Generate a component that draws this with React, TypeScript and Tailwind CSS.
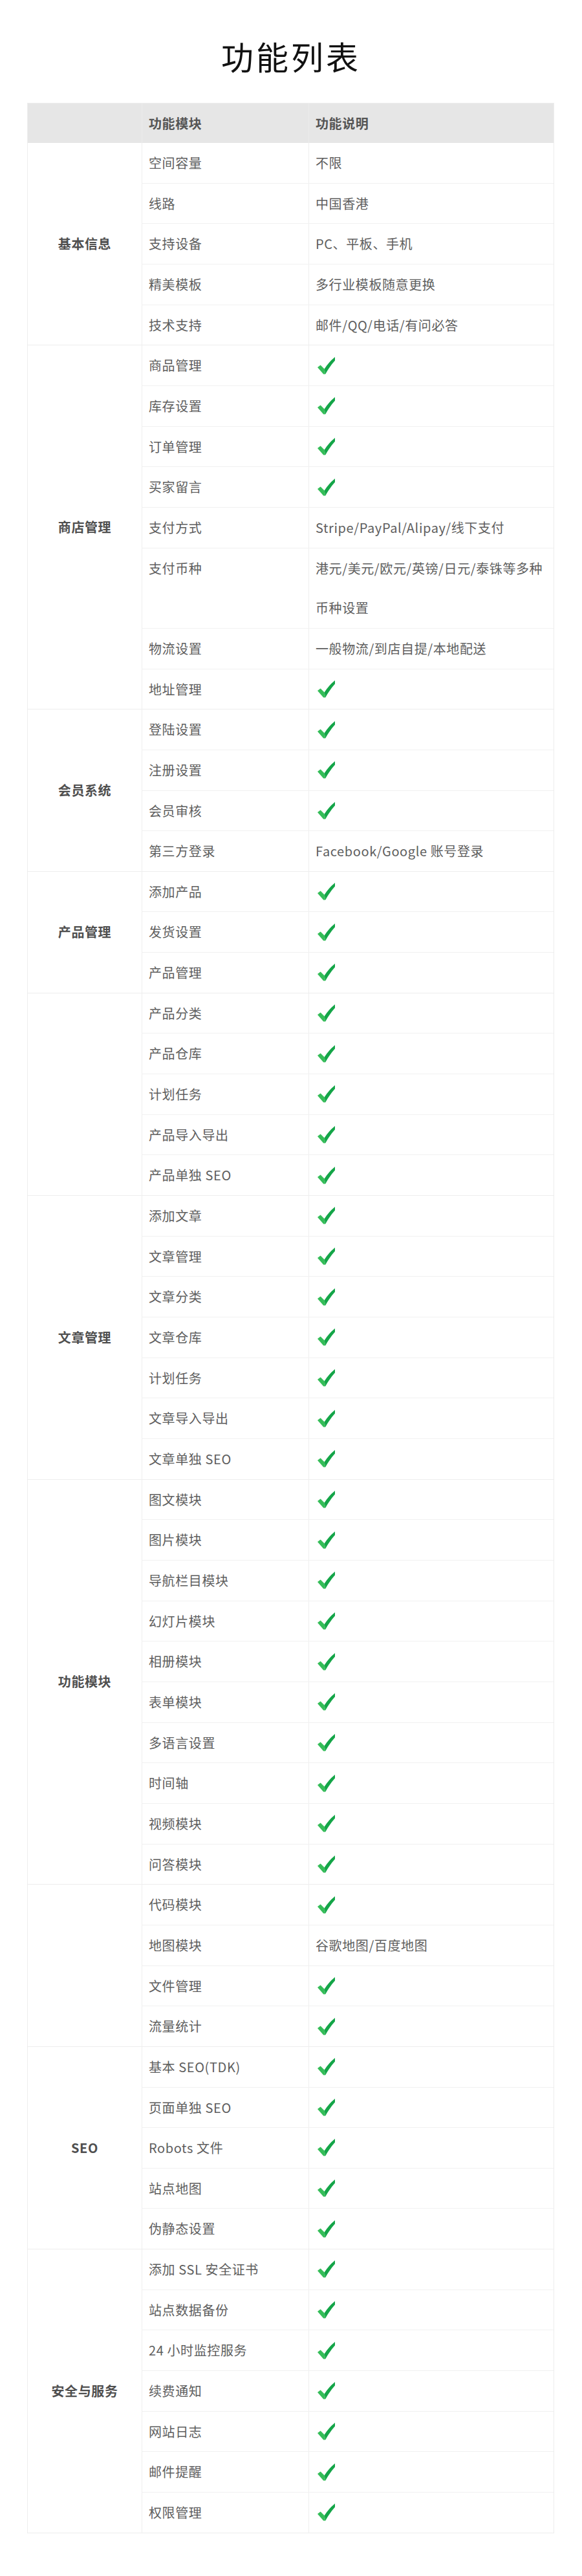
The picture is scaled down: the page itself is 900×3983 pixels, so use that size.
import React from "react";

type Item = { name: string; desc?: string; lines?: string[] };
type Group = { label: string; items: Item[] };

const C = (name: string): Item => ({ name });
const D = (name: string, desc: string): Item => ({ name, desc });

const groups: Group[] = [
  {
    label: "基本信息",
    items: [
      D("空间容量", "不限"),
      D("线路", "中国香港"),
      D("支持设备", "PC、平板、手机"),
      D("精美模板", "多行业模板随意更换"),
      D("技术支持", "邮件/QQ/电话/有问必答"),
    ],
  },
  {
    label: "商店管理",
    items: [
      C("商品管理"),
      C("库存设置"),
      C("订单管理"),
      C("买家留言"),
      D("支付方式", "Stripe/PayPal/Alipay/线下支付"),
      { name: "支付币种", lines: ["港元/美元/欧元/英镑/日元/泰铢等多种", "币种设置"] },
      D("物流设置", "一般物流/到店自提/本地配送"),
      C("地址管理"),
    ],
  },
  {
    label: "会员系统",
    items: [C("登陆设置"), C("注册设置"), C("会员审核"), D("第三方登录", "Facebook/Google 账号登录")],
  },
  { label: "产品管理", items: [C("添加产品"), C("发货设置"), C("产品管理")] },
  {
    label: "",
    items: [C("产品分类"), C("产品仓库"), C("计划任务"), C("产品导入导出"), C("产品单独 SEO")],
  },
  {
    label: "文章管理",
    items: [
      C("添加文章"),
      C("文章管理"),
      C("文章分类"),
      C("文章仓库"),
      C("计划任务"),
      C("文章导入导出"),
      C("文章单独 SEO"),
    ],
  },
  {
    label: "功能模块",
    items: [
      C("图文模块"),
      C("图片模块"),
      C("导航栏目模块"),
      C("幻灯片模块"),
      C("相册模块"),
      C("表单模块"),
      C("多语言设置"),
      C("时间轴"),
      C("视频模块"),
      C("问答模块"),
    ],
  },
  {
    label: "",
    items: [C("代码模块"), D("地图模块", "谷歌地图/百度地图"), C("文件管理"), C("流量统计")],
  },
  {
    label: "SEO",
    items: [C("基本 SEO(TDK)"), C("页面单独 SEO"), C("Robots 文件"), C("站点地图"), C("伪静态设置")],
  },
  {
    label: "安全与服务",
    items: [
      C("添加 SSL 安全证书"),
      C("站点数据备份"),
      C("24 小时监控服务"),
      C("续费通知"),
      C("网站日志"),
      C("邮件提醒"),
      C("权限管理"),
    ],
  },
];

function Check() {
  return (
    <svg width="27" height="27" viewBox="0 0 27 27" className="ml-[3px]">
      <path d="M0 16 L4.6 12.6 L10.6 18.6 L12.2 26.4 L9.2 26.4 Z" fill="#35bd58" />
      <path d="M10.6 18.6 Q17 8 27 0 L27 5.6 Q19.5 13.5 12.2 26.4 Z" fill="#14a548" />
    </svg>
  );
}

function Row({ item, last }: { item: Item; last: boolean }) {
  const double = !!item.lines;
  const rowCls = last
    ? double
      ? "flex h-[123.32px]"
      : "flex h-[61.66px]"
    : double
    ? "flex h-[124.32px] border-b border-[#f1f1f1]"
    : "flex h-[62.66px] border-b border-[#f1f1f1]";
  return (
    <div className={rowCls}>
      <div className="w-[258px] shrink-0 border-r border-[#efefef] pl-[10px] leading-[61.66px] text-[#5e5e5e]">
        {item.name}
      </div>
      <div className="flex-1 pl-[10px] leading-[61.66px] text-[#5e5e5e]">
        {item.lines ? (
          item.lines.map((l) => <div key={l}>{l}</div>)
        ) : item.desc ? (
          item.desc
        ) : (
          <div className="flex h-full items-center">
            <Check />
          </div>
        )}
      </div>
    </div>
  );
}

export default function App() {
  return (
    <div
      className="min-h-[3983px] bg-white pb-[64px]"
      style={{ fontFamily: '"Noto Sans CJK SC", "Noto Sans", sans-serif' }}
    >
      <h1 className="pt-[61px] text-center text-[50px] leading-[50px] tracking-[4px] text-[#111] font-normal">
        功能列表
      </h1>
      <div className="ml-[42px] mt-[48px] w-[815px] border-x border-t border-[#ededed] text-[20px] tracking-[0.6px]">
        <div className="flex h-[61px] bg-[#e6e6e6] font-bold text-[#555] leading-[61px]">
          <div className="w-[177px] shrink-0 border-r border-[#ececec]" />
          <div className="w-[258px] shrink-0 border-r border-[#ececec] pl-[10px]">功能模块</div>
          <div className="flex-1 pl-[10px]">功能说明</div>
        </div>
        {groups.map((g, gi) => (
          <div key={gi} className="flex border-b border-[#ededed]">
            <div className="flex w-[177px] shrink-0 items-center justify-center border-r border-[#efefef] font-bold text-[#4f4f4f]">
              {g.label}
            </div>
            <div className="flex flex-1 flex-col">
              {g.items.map((it, i) => (
                <Row key={i} item={it} last={i === g.items.length - 1} />
              ))}
            </div>
          </div>
        ))}
      </div>
    </div>
  );
}
